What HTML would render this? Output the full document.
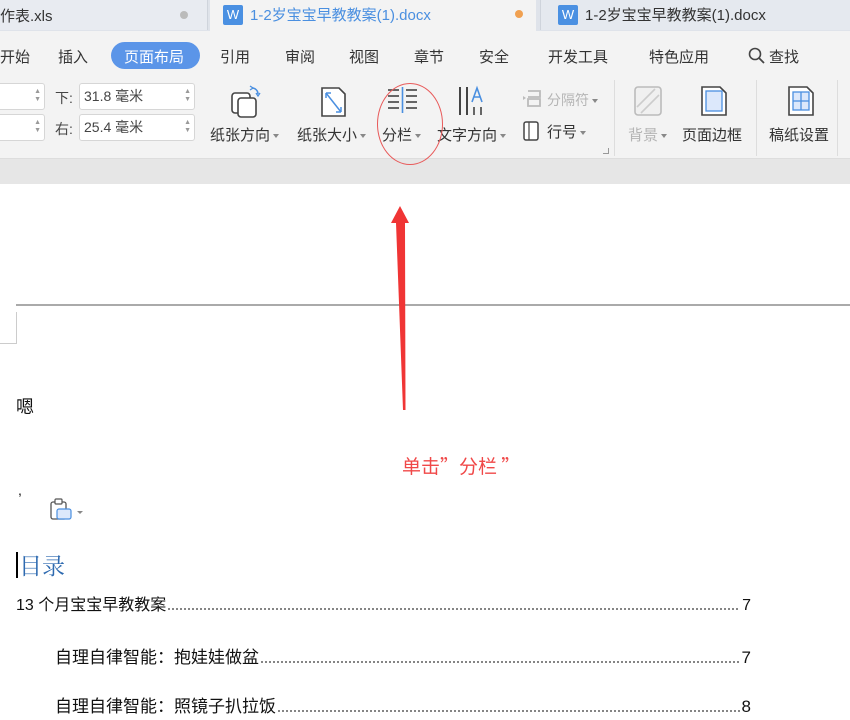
<!DOCTYPE html>
<html><head><meta charset="utf-8"><style>
*{margin:0;padding:0;box-sizing:border-box}
body{width:850px;height:720px;overflow:hidden;background:#fff;font-family:"Liberation Sans","Noto Sans CJK SC",sans-serif;position:relative;color:#333}
.a{position:absolute;white-space:nowrap}
.t{font-size:14px;color:#333}
.inp{position:absolute;background:#fff;border:1px solid #d6d6d6;border-radius:3px;height:27px;font-size:14px;line-height:25px;padding-left:4px;color:#444}
.sp{position:absolute;right:3px;font-size:7px;color:#999;line-height:8px}
.lbl{font-size:14px;color:#444}
.dd::after{content:"";display:inline-block;margin-left:3px;vertical-align:middle;border-left:3px solid transparent;border-right:3px solid transparent;border-top:4px solid #888}
.dis{color:#b5b5b5}
.row{position:absolute;display:flex;align-items:flex-end;white-space:nowrap;color:#111}
.dots{flex:1;height:6px;margin:0 2px 4px 1px;background-image:radial-gradient(circle,#333 0.7px,transparent 1px);background-size:4px 4px;background-repeat:repeat-x;background-position:0 bottom}
</style></head><body>
<div class="a" style="left:0;top:0;width:850px;height:31px;background:#dfe3ea"></div>
<div class="a" style="left:0;top:0;width:208px;height:30px;background:#e8ebf1;border-right:1px solid #cfd4dc"></div>
<div class="a t" style="left:0;top:5px;font-size:15px;color:#333">作表.xls</div>
<div class="a" style="left:180px;top:11px;width:8px;height:8px;border-radius:50%;background:#bbb"></div>
<div class="a" style="left:210px;top:0;width:326px;height:31px;background:#f3f3f3"></div>
<div class="a" style="left:223px;top:5px;width:20px;height:20px;background:#4a90e2;border-radius:2px;color:#fff;font-size:13px;text-align:center;line-height:20px">W</div>
<div class="a" style="left:250px;top:4px;font-size:15px;color:#4a8fe0">1-2岁宝宝早教教案(1).docx</div>
<div class="a" style="left:515px;top:10px;width:8px;height:8px;border-radius:50%;background:#f0a050"></div>
<div class="a" style="left:540px;top:0;width:310px;height:30px;background:#e5e9ef;border-left:1px solid #cfd4dc"></div>
<div class="a" style="left:558px;top:5px;width:20px;height:20px;background:#4a90e2;border-radius:2px;color:#fff;font-size:13px;text-align:center;line-height:20px">W</div>
<div class="a" style="left:585px;top:4px;font-size:15px;color:#333">1-2岁宝宝早教教案(1).docx</div>
<div class="a" style="left:0;top:31px;width:850px;height:129px;background:#f3f3f3"></div>
<div class="a" style="left:111px;top:42px;width:89px;height:27px;border-radius:14px;background:#5b95e8"></div>
<div class="a t" style="left:0;top:46px;font-size:15px">开始</div>
<div class="a t" style="left:58px;top:46px;font-size:15px">插入</div>
<div class="a" style="left:124px;top:46px;font-size:15px;color:#fff">页面布局</div>
<div class="a t" style="left:220px;top:46px;font-size:15px">引用</div>
<div class="a t" style="left:285px;top:46px;font-size:15px">审阅</div>
<div class="a t" style="left:349px;top:46px;font-size:15px">视图</div>
<div class="a t" style="left:414px;top:46px;font-size:15px">章节</div>
<div class="a t" style="left:479px;top:46px;font-size:15px">安全</div>
<div class="a t" style="left:548px;top:46px;font-size:15px">开发工具</div>
<div class="a t" style="left:649px;top:46px;font-size:15px">特色应用</div>
<svg class="a" style="left:748px;top:47px" width="18" height="18"><circle cx="7" cy="7" r="5.5" fill="none" stroke="#444" stroke-width="1.6"/><line x1="11" y1="11" x2="16" y2="16" stroke="#444" stroke-width="1.8"/></svg>
<div class="a t" style="left:769px;top:46px;font-size:15px">查找</div>
<div class="inp" style="left:-5px;top:83px;width:50px">&nbsp;<span class="sp" style="top:4px">▲<br>▼</span></div>
<div class="inp" style="left:-5px;top:114px;width:50px">&nbsp;<span class="sp" style="top:4px">▲<br>▼</span></div>
<div class="a lbl" style="left:55px;top:88px">下:</div>
<div class="a lbl" style="left:55px;top:119px">右:</div>
<div class="inp" style="left:79px;top:83px;width:116px">31.8 毫米<span class="sp" style="top:4px">▲<br>▼</span></div>
<div class="inp" style="left:79px;top:114px;width:116px">25.4 毫米<span class="sp" style="top:4px">▲<br>▼</span></div>
<svg class="a" style="left:230px;top:85px" width="36" height="34"><rect x="2" y="8" width="18" height="20" rx="3" fill="#fff" stroke="#444" stroke-width="1.6"/><rect x="8" y="13" width="18" height="19" rx="3" fill="#fff" stroke="#444" stroke-width="1.6"/><path d="M22 3a6 6 0 0 1 6 6" fill="none" stroke="#4a8fe0" stroke-width="1.5"/><path d="M20 1l3 2-3 2M26 8l2 3 2-3" fill="none" stroke="#4a8fe0" stroke-width="1.3"/></svg>
<svg class="a" style="left:320px;top:85px" width="28" height="34"><path d="M2 3h17l6 6v22H2z" fill="#fff" stroke="#444" stroke-width="1.6"/><line x1="6" y1="8" x2="21" y2="27" stroke="#4a8fe0" stroke-width="1.5"/><path d="M6 8v5M6 8h5M21 27v-5M21 27h-5" stroke="#4a8fe0" stroke-width="1.5" fill="none"/></svg>
<svg class="a" style="left:386px;top:87px" width="34" height="28"><g stroke="#444" stroke-width="1.6"><line x1="2" y1="3" x2="13" y2="3"/><line x1="2" y1="9" x2="13" y2="9"/><line x1="2" y1="15" x2="13" y2="15"/><line x1="2" y1="21" x2="13" y2="21"/><line x1="20" y1="3" x2="31" y2="3"/><line x1="20" y1="9" x2="31" y2="9"/><line x1="20" y1="15" x2="31" y2="15"/><line x1="20" y1="21" x2="31" y2="21"/></g><line x1="16.5" y1="0" x2="16.5" y2="26" stroke="#4a8fe0" stroke-width="1.6"/></svg>
<svg class="a" style="left:457px;top:85px" width="34" height="32"><g stroke="#444" stroke-width="2"><line x1="3" y1="2" x2="3" y2="30"/><line x1="10" y1="2" x2="10" y2="30"/></g><g stroke="#444" stroke-width="1.6"><line x1="17" y1="22" x2="17" y2="30"/><line x1="24" y1="22" x2="24" y2="30"/></g><path d="M15 17l5-14 5 14M17 12h6" fill="none" stroke="#4a8fe0" stroke-width="1.6"/></svg>
<svg class="a" style="left:521px;top:87px" width="24" height="22"><path d="M7 4h12v6H7M7 12h12v7H7z" fill="none" stroke="#bbb" stroke-width="1.8"/><path d="M2 9l3 2-3 2" fill="#bbb"/></svg>
<div class="a dis dd" style="left:547px;top:90px;font-size:14px">分隔符</div>
<svg class="a" style="left:522px;top:120px" width="20" height="22"><rect x="2" y="2" width="14" height="18" rx="2" fill="#fff" stroke="#444" stroke-width="1.5"/><line x1="7" y1="2" x2="7" y2="20" stroke="#444" stroke-width="1.2"/></svg>
<div class="a dd" style="left:547px;top:121px;font-size:15px;color:#333">行号</div>
<div class="a" style="left:603px;top:148px;width:6px;height:6px;border-right:1px solid #999;border-bottom:1px solid #999"></div>
<div class="a" style="left:614px;top:80px;width:1px;height:76px;background:#ddd"></div>
<svg class="a" style="left:633px;top:85px" width="30" height="32"><rect x="2" y="2" width="26" height="28" rx="3" fill="#f0f0f0" stroke="#bbb" stroke-width="1.6"/><line x1="4" y1="22" x2="22" y2="4" stroke="#ccc" stroke-width="1.6"/><line x1="8" y1="28" x2="26" y2="10" stroke="#ccc" stroke-width="1.6"/></svg>
<svg class="a" style="left:700px;top:85px" width="28" height="32"><path d="M2 2h18l6 6v22H2z" fill="#fff" stroke="#444" stroke-width="1.6"/><rect x="6" y="6" width="16" height="20" fill="#dce8fb" stroke="#4a8fe0" stroke-width="1.3"/></svg>
<div class="a" style="left:756px;top:80px;width:1px;height:76px;background:#ddd"></div>
<svg class="a" style="left:787px;top:85px" width="28" height="32"><path d="M2 2h18l6 6v22H2z" fill="#fff" stroke="#444" stroke-width="1.6"/><rect x="6" y="7" width="16" height="18" fill="#dce8fb" stroke="#4a8fe0" stroke-width="1.3"/><line x1="14" y1="7" x2="14" y2="25" stroke="#4a8fe0" stroke-width="1.3"/><line x1="6" y1="16" x2="22" y2="16" stroke="#4a8fe0" stroke-width="1.3"/></svg>
<div class="a" style="left:837px;top:80px;width:1px;height:76px;background:#ddd"></div>
<div class="a t dd" style="left:210px;top:124px;font-size:15px">纸张方向</div>
<div class="a t dd" style="left:297px;top:124px;font-size:15px">纸张大小</div>
<div class="a t dd" style="left:382px;top:124px;font-size:15px">分栏</div>
<div class="a t dd" style="left:437px;top:124px;font-size:15px">文字方向</div>
<div class="a dis dd" style="left:628px;top:124px;font-size:15px">背景</div>
<div class="a t" style="left:682px;top:124px;font-size:15px">页面边框</div>
<div class="a t" style="left:769px;top:124px;font-size:15px">稿纸设置</div>
<div class="a" style="left:0;top:158px;width:850px;height:26px;background:#e6e6e6;border-top:1px solid #ddd"></div>
<div class="a" style="left:16px;top:304px;width:834px;height:2px;background:#aaa"></div>
<div class="a" style="left:0;top:312px;width:17px;height:32px;border-right:1px solid #ccc;border-bottom:1px solid #ccc"></div>
<div class="a" style="left:16px;top:393px;font-size:18px;color:#111">嗯</div>
<div class="a" style="left:18px;top:482px;font-size:14px;color:#111">,</div>
<svg class="a" style="left:50px;top:498px" width="36" height="24"><rect x="1" y="4" width="15" height="17" rx="2" fill="#fff" stroke="#555" stroke-width="1.3"/><rect x="5" y="1" width="7" height="5" rx="1" fill="#fff" stroke="#555" stroke-width="1.2"/><rect x="7" y="11" width="14" height="10" rx="2" fill="#dce8fb" stroke="#4a8fe0" stroke-width="1.2"/><path d="M27 13h6l-3 3z" fill="#888"/></svg>
<div class="a" style="left:16px;top:552px;width:2px;height:26px;background:#000"></div>
<div class="a" style="left:19px;top:548px;font-size:23px;color:#2e6ab0;font-family:'Liberation Serif','Noto Serif CJK SC',serif">目录</div>
<div class="row" style="left:16px;top:591px;width:735px;font-size:16px"><span>13 个月宝宝早教教案</span><span class="dots"></span><span>7</span></div>
<div class="row" style="left:55px;top:643px;width:696px;font-size:17px"><span>自理自律智能：抱娃娃做盆</span><span class="dots"></span><span>7</span></div>
<div class="row" style="left:55px;top:692px;width:696px;font-size:17px"><span>自理自律智能：照镜子扒拉饭</span><span class="dots"></span><span>8</span></div>
<div class="a" style="left:377px;top:83px;width:66px;height:82px;border:1px solid #e85a5a;border-radius:50%"></div>
<svg class="a" style="left:385px;top:200px" width="30" height="215"><path d="M15 6L24 23L20 23L20.5 210L18 210L11 23L6 23Z" fill="#f03535"/></svg>
<div class="a" style="left:402px;top:452px;font-size:19px;color:#f04848;font-family:'Noto Sans CJK SC',sans-serif">单击”分栏 ”</div>
</body></html>
